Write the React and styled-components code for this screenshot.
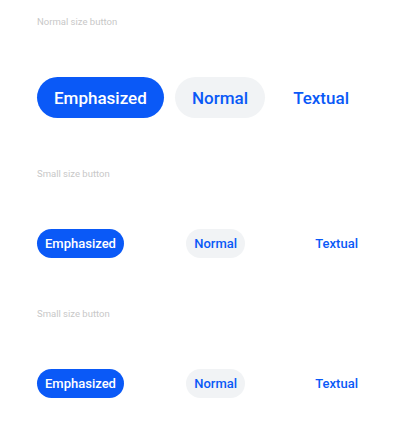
import React from "react";
import styled, { createGlobalStyle } from "styled-components";

const Global = createGlobalStyle`
  html, body { margin: 0; padding: 0; background: #ffffff; }
  body { font-family: Roboto, "Noto Sans", sans-serif; }
`;

const Page = styled.div`
  display: flex;
  flex-direction: column;
  gap: 49px;
  padding: 15px 37px 0 37px;
  width: 403px;
  box-sizing: border-box;
`;

const Section = styled.section`
  display: flex;
  flex-direction: column;
`;

const Label = styled.div`
  font-size: 9.5px;
  line-height: 14px;
  height: 14px;
  color: #c8c8c8;
  margin-bottom: 48px;
`;

const Row = styled.div`
  display: flex;
  align-items: center;
  justify-content: space-between;
`;

const Button = styled.button`
  border: none;
  outline: none;
  font-family: Roboto, "Noto Sans", sans-serif;
  font-weight: 500;
  border-radius: 999px;
  box-sizing: border-box;
  display: inline-flex;
  align-items: center;
  justify-content: center;
  cursor: pointer;
  height: ${(p) => (p.$small ? "29px" : "41px")};
  font-size: ${(p) => (p.$small ? "13px" : "17px")};
  padding: 0 ${(p) => (p.$small ? "8px" : "17px")};
  background: ${(p) =>
    p.$kind === "emph" ? "#0a59f7" : p.$kind === "normal" ? "#f1f3f5" : "transparent"};
  color: ${(p) => (p.$kind === "emph" ? "#ffffff" : "#0a59f7")};
`;

const variants = [
  { label: "Normal size button", small: false },
  { label: "Small size button", small: true },
  { label: "Small size button", small: true },
];

export default function App() {
  return (
    <>
      <Global />
      <Page>
        {variants.map((v, i) => (
          <Section key={i}>
            <Label>{v.label}</Label>
            <Row>
              <Button $kind="emph" $small={v.small}>Emphasized</Button>
              <Button $kind="normal" $small={v.small}>Normal</Button>
              <Button $kind="text" $small={v.small}>Textual</Button>
            </Row>
          </Section>
        ))}
      </Page>
    </>
  );
}
